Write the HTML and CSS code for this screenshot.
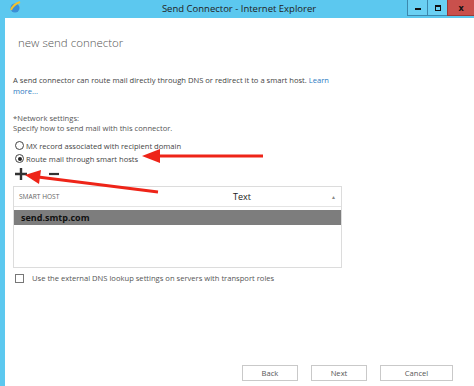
FILE: index.html
```html
<!DOCTYPE html>
<html>
  <head>
    <meta charset="utf-8">
    <title>Send Connector</title>
    <link rel="stylesheet" href="styles.css">
  </head>
  <body>
    <div class="win">
      <div class="bar">
        <svg class="logo" width="12" height="12" viewBox="0 0 12 12">
          <circle cx="6" cy="7" r="4.5" fill="#3b8fd6"/>
          <path d="M2 9 C4 4 8 2 11 1" stroke="#f2c12e" stroke-width="2" fill="none"/>
        </svg>
        <div class="ttl">Send Connector - Internet Explorer</div>
        <div class="ctl">
          <div class="btn"><span class="mn"></span></div>
          <div class="btn"><span class="mx"></span></div>
          <div class="btn cls">x</div>
        </div>
      </div>
      <div class="frame">
        <div class="head">new send connector</div>
        <div class="body">
          <p class="intro">A send connector can route mail directly through DNS or redirect it to a smart host. <span class="lnk">Learn</span><br><span class="lnk">more...</span></p>
          <div class="lbl">*Network settings:</div>
          <div class="lbl">Specify how to send mail with this connector.</div>
          <div class="radios">
            <div class="opt"><span class="rad"></span>MX record associated with recipient domain</div>
            <div class="opt"><span class="rad on"></span>Route mail through smart hosts</div>
          </div>
          <div class="tools">
            <svg width="12" height="12" viewBox="0 0 12 12"><path d="M6 0V12M0 6H12" stroke="#333" stroke-width="2.4"/></svg>
            <svg width="6" height="6" viewBox="0 0 6 6"><path d="M4 0L2 5" stroke="#888" stroke-width="1"/></svg>
            <svg width="10" height="12" viewBox="0 0 10 12"><path d="M0 6H10" stroke="#333" stroke-width="2.2"/></svg>
          </div>
          <div class="grid">
            <div class="ghead">
              <span class="c1">SMART HOST</span>
              <span class="c2">Text</span>
              <span class="sort">&#9650;</span>
            </div>
            <div class="row">send.smtp.com</div>
          </div>
          <div class="chk"><span class="box"></span>Use the external DNS lookup settings on servers with transport roles</div>
        </div>
        <div class="foot">
          <div class="pb">Back</div>
          <div class="pb">Next</div>
          <div class="pb wide">Cancel</div>
        </div>
      </div>
      <svg class="arrows" width="474" height="386" viewBox="0 0 474 386">
        <path d="M263 156 H156" stroke="#ee2418" stroke-width="3"/>
        <path d="M142 156 L160 149 L160 163 Z" fill="#ee2418"/>
        <path d="M158 192 L38 177" stroke="#ee2418" stroke-width="3"/>
        <path d="M25 175 L41 170 L39 184 Z" fill="#ee2418"/>
      </svg>
    </div>
  </body>
</html>
```
FILE: styles.css
```css
body {
  margin: 0;
  font-family: "Open Sans", "Noto Sans", sans-serif;
  color: #444;
}
.win {
  position: relative;
  width: 474px;
  height: 386px;
  overflow: hidden;
  background: #5cc8ef;
  display: flex;
  flex-direction: column;
}
.bar {
  height: 18px;
  display: flex;
  align-items: center;
  flex-shrink: 0;
}
.logo {
  margin-left: 9px;
  margin-top: -4px;
}
.ttl {
  flex: 1;
  text-align: center;
  font-size: 9.5px;
  color: #222;
  padding-left: 50px;
  margin-top: -2px;
}
.ctl {
  display: flex;
  align-self: flex-start;
  height: 16px;
}
.btn {
  width: 19px;
  height: 15px;
  border: 1px solid #3c88ad;
  border-top: none;
  border-right: none;
  background: #6ad0f3;
  display: flex;
  align-items: center;
  justify-content: center;
}
.mn {
  width: 6px;
  height: 2px;
  background: #111;
  margin-top: 3px;
}
.mx {
  width: 4px;
  height: 3px;
  border: 1px solid #111;
  border-top-width: 2px;
}
.cls {
  width: 26px;
  background: #c9504c;
  color: #111;
  font-size: 9px;
  font-weight: bold;
  border-color: #9c3a36;
}
.frame {
  flex: 1;
  margin-left: 5px;
  background: #fff;
  display: flex;
  flex-direction: column;
}
.head {
  font-size: 11.5px;
  font-weight: 300;
  color: #555;
  padding: 17px 0 0 13px;
  height: 24px;
}
.body {
  flex: 1;
  padding: 0 8px;
  font-size: 7.6px;
}
.intro {
  margin: 16px 0 16px;
  line-height: 11px;
  width: 330px;
  color: #444;
}
.lnk {
  color: #2b79c2;
}
.lbl {
  line-height: 10px;
  color: #555;
}
.radios {
  margin-top: 6px;
}
.opt {
  display: flex;
  align-items: center;
  height: 13px;
  color: #444;
}
.rad {
  width: 7px;
  height: 7px;
  border: 1px solid #444;
  border-radius: 50%;
  margin: 0 2px 0 2px;
  display: flex;
  align-items: center;
  justify-content: center;
}
.rad.on::after {
  content: "";
  width: 4px;
  height: 4px;
  border-radius: 50%;
  background: #222;
}
.tools {
  display: flex;
  align-items: center;
  gap: 8px;
  height: 18px;
  padding-left: 2px;
}
.grid {
  margin-top: 3px;
  width: 327px;
  height: 80px;
  border: 1px solid #dcdcdc;
}
.ghead {
  height: 19px;
  display: flex;
  align-items: center;
  border-bottom: 1px solid #e4e4e4;
  padding: 0 5px;
}
.c1 {
  font-size: 6.6px;
  color: #666;
  width: 214px;
}
.c2 {
  flex: 1;
  font-size: 9px;
  color: #222;
}
.sort {
  font-size: 5px;
  color: #888;
}
.row {
  margin: 3px 0 0;
  height: 15px;
  line-height: 15px;
  background: #7d7d7d;
  padding-left: 7px;
  font-size: 9px;
  font-weight: bold;
  color: #111;
}
.chk {
  display: flex;
  align-items: center;
  margin-top: 4px;
  height: 12px;
  color: #555;
}
.box {
  width: 7px;
  height: 7px;
  border: 1px solid #777;
  margin: 0 8px 0 2px;
}
.foot {
  display: flex;
  justify-content: flex-end;
  gap: 13px;
  padding: 0 21px 5px 0;
}
.pb {
  box-sizing: border-box;
  width: 56px;
  height: 16px;
  border: 1px solid #c9c9c9;
  background: #fff;
  font-size: 7.6px;
  color: #555;
  display: flex;
  align-items: center;
  justify-content: center;
}
.pb.wide {
  width: 73px;
}
.arrows {
  position: absolute;
  left: 0;
  top: 0;
}
```
